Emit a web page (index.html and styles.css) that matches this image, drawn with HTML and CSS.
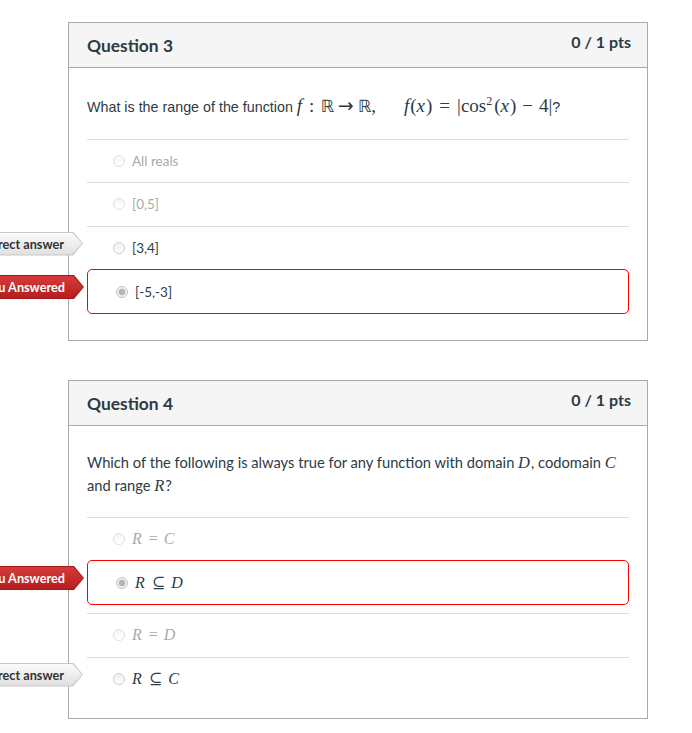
FILE: index.html
```html
<!DOCTYPE html>
<html lang="en">
<head>
<meta charset="utf-8">
<title>Quiz results</title>
<link rel="stylesheet" href="styles.css">
</head>
<body>
<div class="page">
  <section class="quiz-card">
    <header class="card-header">
      <h2 class="q-title">Question 3</h2>
      <span class="q-pts">0 / 1 pts</span>
    </header>
    <div class="card-body">
      <p class="q-text q-text-arial">What is the range of the function <span class="math math-lg"><i>f</i><span class="op">:</span><span class="bb">ℝ</span><span class="op arrow">→</span><span class="bb">ℝ</span>,<span class="quad"></span><i>f</i>(<i>x</i>)<span class="op rel">=</span>|cos<sup>2</sup>(<i>x</i>)<span class="op">−</span>4|</span>?</p>
      <div class="answers">
        <div class="answer muted"><span class="radio"></span><span class="a-text">All reals</span></div>
        <div class="answer muted"><span class="radio"></span><span class="a-text">[0,5]</span></div>
        <div class="answer">
          <span class="badge badge-correct"><span class="badge-inner">Correct answer</span></span>
          <span class="radio"></span><span class="a-text">[3,4]</span>
        </div>
        <div class="answer selected">
          <span class="badge badge-wrong"><span class="badge-inner">You Answered</span></span>
          <span class="radio checked"></span><span class="a-text">[-5,-3]</span>
        </div>
      </div>
    </div>
  </section>

  <section class="quiz-card">
    <header class="card-header">
      <h2 class="q-title">Question 4</h2>
      <span class="q-pts">0 / 1 pts</span>
    </header>
    <div class="card-body">
      <p class="q-text">Which of the following is always true for any function with domain <span class="math"><i>D</i></span>, codomain <span class="math"><i>C</i></span> and range <span class="math"><i>R</i></span>?</p>
      <div class="answers">
        <div class="answer muted"><span class="radio"></span><span class="a-text math"><i>R</i><span class="op rel">=</span><i>C</i></span></div>
        <div class="answer selected">
          <span class="badge badge-wrong"><span class="badge-inner">You Answered</span></span>
          <span class="radio checked"></span><span class="a-text math"><i>R</i><span class="op rel">⊆</span><i>D</i></span>
        </div>
        <div class="answer muted"><span class="radio"></span><span class="a-text math"><i>R</i><span class="op rel">=</span><i>D</i></span></div>
        <div class="answer">
          <span class="badge badge-correct"><span class="badge-inner">Correct answer</span></span>
          <span class="radio"></span><span class="a-text math"><i>R</i><span class="op rel">⊆</span><i>C</i></span>
        </div>
      </div>
    </div>
  </section>
</div>
</body>
</html>
```

FILE: styles.css
```css
html, body {
  margin: 0;
  padding: 0;
  background: #ffffff;
}

body {
  font-family: Lato, "Noto Sans", sans-serif;
  color: #2d3b45;
  overflow: hidden;
}

.page {
  padding: 22px 0 0 68px;
}

.quiz-card {
  width: 580px;
  box-sizing: border-box;
  border: 1px solid #aaaaaa;
  margin-bottom: 39px;
}

.card-header {
  display: flex;
  justify-content: space-between;
  align-items: flex-start;
  height: 43.5px;
  background: #f5f5f5;
  border-bottom: 1px solid #aaaaaa;
  padding: 0 16px 0 18px;
}

.q-title {
  margin: 0;
  padding-top: 13px;
  font-size: 17.4px;
  line-height: 20px;
  font-weight: 700;
  color: #2d3b45;
}

.q-pts {
  padding-top: 9px;
  font-size: 16px;
  line-height: 20px;
  font-weight: 700;
  color: #2d3b45;
}

.card-body {
  padding: 0 18px 18px 18px;
}

.q-text {
  margin: 0;
  padding: 25px 0 20px 0;
  font-size: 14.7px;
  line-height: 23px;
  color: #2d3b45;
}

.q-text-arial {
  padding: 27px 0 20px 0;
  font-family: "Liberation Sans", Arial, sans-serif;
  font-size: 14.3px;
}

.math {
  font-family: "Liberation Serif", "DejaVu Serif", serif;
  font-size: 16.5px;
}

.math i {
  font-style: italic;
  padding-right: 1px;
}

.math sup {
  font-size: 12px;
  vertical-align: 7px;
  line-height: 0;
  padding-right: 2px;
}

.math .op {
  margin: 0 6px;
}

.math .rel {
  margin: 0 7px;
}

.answer .math .rel {
  margin: 0 6px;
}

.math .arrow {
  font-family: "DejaVu Sans", sans-serif;
  font-size: 19px;
  margin: 0 4px;
}

.math .bb {
  font-family: "DejaVu Sans", sans-serif;
  font-size: 17px;
  font-weight: 400;
}

.math .quad {
  display: inline-block;
  width: 28px;
}

.math-lg {
  font-size: 19px;
  line-height: 20px;
}

.answers {
  display: flex;
  flex-direction: column;
}

.answer {
  position: relative;
  display: flex;
  align-items: center;
  gap: 7px;
  height: 42.5px;
  border-top: 1px solid #dddddd;
  padding-left: 26px;
  font-size: 13.5px;
  color: #2d3b45;
}

.answer.muted {
  color: #aaaaaa;
}

.answer.selected {
  height: 43px;
  border: 1px solid #ff0000;
  border-radius: 5px;
  margin-bottom: 8px;
  padding-left: 28px;
}

.answer .math {
  font-size: 16px;
}

.radio {
  flex: none;
  width: 12px;
  height: 12px;
  box-sizing: border-box;
  border-radius: 50%;
  border: 1px solid #cfcfcf;
  background: linear-gradient(#efefef, #ffffff);
}

.answer.muted .radio {
  border-color: #e0e0e0;
  background: linear-gradient(#f6f6f6, #ffffff);
}

.radio.checked {
  border-color: #c4c4c4;
  background: radial-gradient(circle, #b5b5b5 0, #b5b5b5 3px, #ececec 3.6px, #f7f7f7 100%);
}

.badge {
  position: absolute;
  right: calc(100% + 4px);
  top: 5px;
  width: 130px;
  height: 24px;
  box-sizing: border-box;
  padding: 1px 1px 1px 0;
  clip-path: polygon(0 0, calc(100% - 10px) 0, 100% 50%, calc(100% - 10px) 100%, 0 100%);
}

.badge-inner {
  display: block;
  height: 22px;
  line-height: 22px;
  padding-right: 18px;
  text-align: right;
  font-size: 12.7px;
  font-weight: 700;
  white-space: nowrap;
  clip-path: polygon(0 0, calc(100% - 10px) 0, 100% 50%, calc(100% - 10px) 100%, 0 100%);
}

.badge-correct {
  background: #c8c8c8;
}

.badge-correct .badge-inner {
  background: linear-gradient(#fbfbfb, #e0e0e0);
  color: #333333;
}

.badge-wrong {
  background: #a61818;
}

.badge-wrong .badge-inner {
  background: linear-gradient(#d83a3a, #b31f1f);
  color: #ffffff;
}
```
